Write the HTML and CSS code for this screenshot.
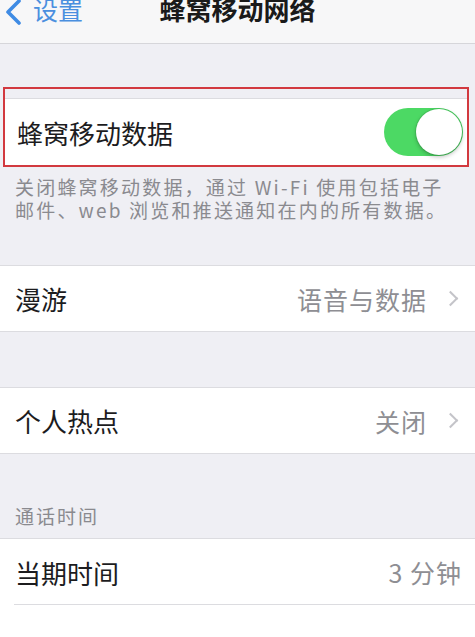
FILE: index.html
```html
<!DOCTYPE html>
<html lang="zh-CN">
<head>
    <meta charset="UTF-8">
    <meta name="viewport" content="width=device-width, initial-scale=1.0">
    <title>蜂窝移动网络</title>
    <link rel="stylesheet" href="styles.css">
</head>
<body>
    <div class="nav">
        <a class="back" href="#">
            <svg class="back-icon" width="20" height="26" viewBox="0 0 20 26">
                <path d="M16 2 L5 13 L16 24" fill="none" stroke="#3f8be4" stroke-width="3.6" stroke-linecap="round" stroke-linejoin="round"/>
            </svg>
            <span>设置</span>
        </a>
        <div class="nav-title">蜂窝移动网络</div>
        <div></div>
    </div>

    <div class="highlight">
        <div class="cell cell-top">
            <span class="cell-label">蜂窝移动数据</span>
            <div class="switch on"><div class="knob"></div></div>
        </div>
    </div>
    <div class="footer-note">
        <p>关闭蜂窝移动数据，通过 Wi-Fi 使用包括电子</p>
        <p>邮件、web 浏览和推送通知在内的所有数据。</p>
    </div>

    <div class="group group-roam">
        <div class="cell">
            <span class="cell-label">漫游</span>
            <span class="cell-value">语音与数据</span>
            <span class="chevron"></span>
        </div>
    </div>

    <div class="group group-hotspot">
        <div class="cell">
            <span class="cell-label">个人热点</span>
            <span class="cell-value">关闭</span>
            <span class="chevron"></span>
        </div>
    </div>

    <div class="section-header">通话时间</div>
    <div class="group group-time">
        <div class="cell cell-inset">
            <span class="cell-label">当期时间</span>
            <span class="cell-value">3 分钟</span>
        </div>
        <div class="cell cell-empty"></div>
    </div>
</body>
</html>
```

FILE: styles.css
```css
* {
    margin: 0;
    padding: 0;
    box-sizing: border-box;
}

body {
    font-family: "Noto Sans CJK SC", "Noto Sans", sans-serif;
    background-color: #efeff4;
    color: #1c1c1e;
    overflow: hidden;
}

.nav {
    height: 44px;
    background-color: #f7f7f8;
    border-bottom: 1px solid #d6d6da;
    display: grid;
    grid-template-columns: 1fr auto 1fr;
    align-items: start;
}

.back {
    display: flex;
    align-items: flex-start;
    text-decoration: none;
    color: #4a8fdf;
    font-size: 25px;
    line-height: 20px;
    padding-left: 3px;
}

.back-icon {
    margin-top: -1px;
    margin-right: 10px;
}

.back span {
    margin-top: -1px;
}

.nav-title {
    font-size: 26px;
    line-height: 20px;
    font-weight: 700;
    color: #1a1a1a;
    margin-top: -1px;
}

.highlight {
    margin: 43px 6px 0 3px;
    border: 2px solid #d2393f;
    padding-top: 9px;
}

.cell {
    height: 65px;
    background-color: #fff;
    display: flex;
    align-items: center;
    padding: 0 13px 0 15px;
}

.cell-top {
    border-top: 1px solid #dcdce0;
    height: 67px;
    padding: 0 4px 0 12px;
}

.cell-label {
    font-size: 26px;
    flex: 1;
}

.cell-value {
    font-size: 25px;
    letter-spacing: 1px;
    color: #8e8e93;
}

.chevron {
    width: 11px;
    height: 11px;
    border-top: 2.5px solid #c4c4c9;
    border-right: 2.5px solid #c4c4c9;
    transform: rotate(45deg);
    margin: 0 6px 0 18px;
}

.switch {
    width: 79px;
    height: 48px;
    border-radius: 24px;
    background-color: #4cd964;
    position: relative;
}

.switch .knob {
    position: absolute;
    top: 1px;
    right: 1px;
    width: 46px;
    height: 46px;
    border-radius: 50%;
    background-color: #fff;
    box-shadow: 0 2px 4px rgba(0, 0, 0, 0.25), 0 0 0 1px rgba(0, 0, 0, 0.08);
}

.footer-note {
    font-size: 19px;
    line-height: 23px;
    letter-spacing: 2.2px;
    color: #8a8a8f;
    padding: 8px 0 0 15px;
    height: 98px;
    white-space: nowrap;
}

.group {
    border-top: 1px solid #dcdce0;
    border-bottom: 1px solid #dcdce0;
}

.group-roam {
    margin-bottom: 55px;
}

.group-time {
    border-bottom: none;
}

.section-header {
    font-size: 19px;
    line-height: 23px;
    letter-spacing: 2px;
    color: #8a8a8f;
    padding: 50px 15px 11px;
}

.cell-inset {
    position: relative;
    height: 66px;
}

.cell-inset::after {
    content: "";
    position: absolute;
    left: 14px;
    right: 0;
    bottom: 0;
    height: 1px;
    background-color: #dcdce0;
}

.cell-empty {
    height: 40px;
}
```
